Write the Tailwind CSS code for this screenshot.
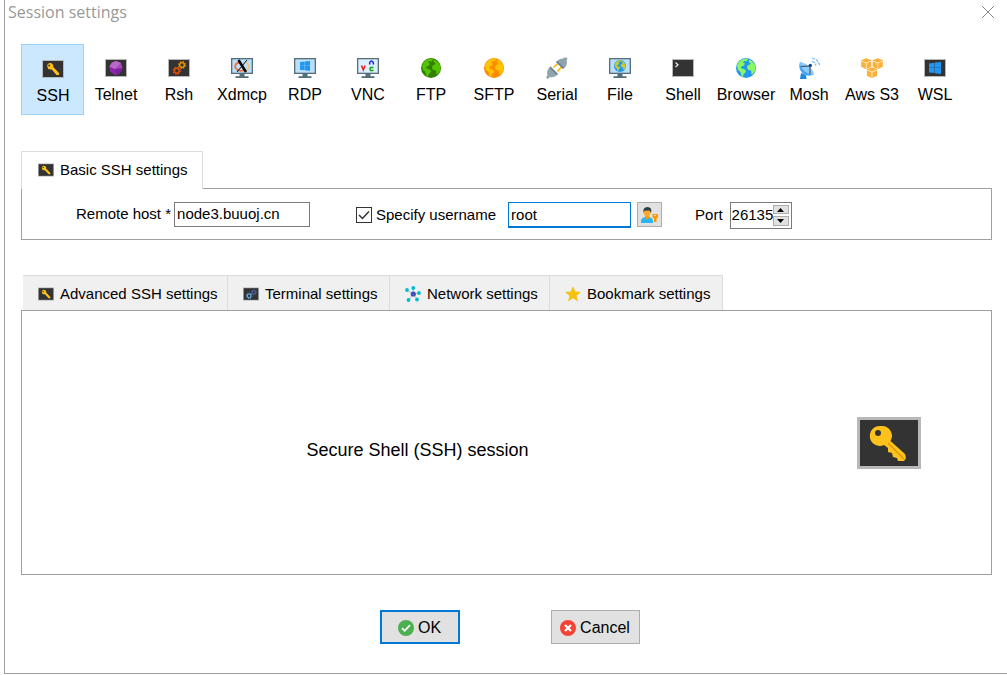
<!DOCTYPE html>
<html lang="en">
<head>
    <meta charset="UTF-8">
    <meta name="viewport" content="width=device-width, initial-scale=1.0">
    <title>Session settings</title>
    <script src="https://cdn.jsdelivr.net/npm/@tailwindcss/browser@4"></script>
</head>
<body class="flex flex-col min-h-screen bg-white pl-1 pb-px text-black text-[15px] leading-5 font-['Liberation_Sans',Arial,sans-serif]">
    <!-- Shared icons -->
    <svg class="hidden">
        <symbol id="key" viewBox="0 0 64 52">
            <path fill="#b8b8b8" d="M0 0h64v52H0z"/>
            <path fill="#333" d="M3 3h58v46H3z"/>
            <path fill="#ffc21c" fill-rule="evenodd" d="M24 9a10 10 0 1 0 3 19l4 3v4l4 1 1 4 4 1 1 3h6l2-3-1-4-14.500-13A10 10 0 0 0 24 9zm-3 4a3 3 0 1 1 0 6 3 3 0 0 1 0-6z"/>
            <path stroke="#d99a10" stroke-width="1.500" d="M31 26l16 16"/>
        </symbol>
        <symbol id="small-key" viewBox="0 0 22 18">
            <path fill="#b8b8b8" d="M0 0h22v18H0z"/>
            <path fill="#333" d="M1 1h20v16H1z"/>
            <path fill="#ffc21c" fill-rule="evenodd" d="M8 3a3.200 3.200 0 1 0 1.500 6.200L14.500 15H17v-2l-5.800-6A3.200 3.200 0 0 0 8 3zm-.8 1.500a1 1 0 1 1 0 2 1 1 0 0 1 0-2z"/>
        </symbol>
        <symbol id="globe" viewBox="0 0 20 20">
            <path fill="currentColor" d="M5 2Q8 .3 11 .4l1 1.600-2 1.500-2-.5-1 1.500 2 1-1 2-2.500 1L5 10l2.500 1 2.500 1.500-.5 2-2 1.500L7 19l-1.500-.7-1-4.300-2.500-2L1 8q1-4 4-6zM13.500 1.500Q18.500 4 19.500 9l-.5 4-2.500 3.500-1-.5-.5-3.500-2.500-.5-1.500-2 .5-2.500 2.500-1 .5-1.500-2-1z"/>
        </symbol>
        <symbol id="monitor" viewBox="0 0 22 20">
            <path fill="#546e7a" d="M0 0h22v16H0zM8.500 16h5v2.500h-5zM4.500 18.300h13V20h-13z"/>
            <path fill="currentColor" d="M1.300 1.300h19.400v13.400H1.300z"/>
        </symbol>
        <symbol id="gear" viewBox="0 0 10 10">
            <circle cx="5" cy="5" r="2.900" fill="none" stroke="currentColor" stroke-width="1.600"/>
            <circle cx="5" cy="5" r="4.200" fill="none" stroke="currentColor" stroke-width="1.500" stroke-dasharray="1.650 1.650"/>
        </symbol>
        <symbol id="windows" viewBox="0 0 12 12">
            <path fill="#2196f3" d="M0 1.500L5.600.7v5H0zM6 .6L12 0v5.700H6zM0 6.100h5.600v5L0 10.400zM6 6.100h6V12l-6-.8z"/>
        </symbol>
        <symbol id="cube" viewBox="0 0 12 12">
            <path fill="#fbb03b" d="M6 .3l5.300 2v6.900L6 11.700.7 9.200V2.300z"/>
            <path fill="none" stroke="#fff" stroke-width=".7" d="M1 3.300L6 5.200l5-1.900M6 5.200v6.300"/>
        </symbol>
    </svg>

    <div class="flex flex-col flex-1 border-l border-b border-[#a0a0a0]">
        <!-- Title bar -->
        <header class="flex items-center justify-between h-6 pl-[3px] pr-3 text-base text-[#999] font-['Open_Sans','Segoe_UI',sans-serif]">
            <h1>Session settings</h1>
            <button aria-label="Close">
                <svg class="w-[14px] h-[14px]" viewBox="0 0 14 14" fill="none" stroke="#888" stroke-width="1"><path d="M1 1l12 12M13 1L1 13"/></svg>
            </button>
        </header>

        <main class="flex flex-col flex-1 pl-4 pr-[15px] pt-5 pb-[29px]">
            <!-- Session types -->
            <nav class="flex items-start h-[71px] text-base leading-5 whitespace-nowrap">
                <button class="flex flex-col items-center w-[63px] h-[71px] pt-[13px] pl-px gap-2 border border-[#99d1ff] bg-[#cce8ff]">
                    <svg class="w-[22px] h-5" viewBox="0 0 22 20"><use href="#small-key" y="2" width="22" height="18"/></svg>
                    SSH
                </button>
                <button class="flex flex-col items-center w-[63px] pt-[14px] pl-px gap-[7px]">
                    <svg class="w-[22px] h-5" viewBox="0 0 22 20">
                        <path fill="#b8b8b8" d="M0 1h22v18H0z"/><path fill="#333" d="M1 2h20v16H1z"/>
                        <path fill="#ab47bc" d="M11 3l5 2 1.500 5-3 5.500-4 1.500-5-3.500-1-5L7 4.500z"/><path fill="#8e24aa" d="M4.500 8.500L10 11l.5 6-5-3.500z"/><path fill="#7b1fa2" d="M17.500 10l-7.500 1 .5 6 4-1.500z"/><path fill="#ba68c8" d="M11 3l5 2-6 6-5.500-2.500L7 4.500z"/>
                    </svg>
                    Telnet
                </button>
                <button class="flex flex-col items-center w-[63px] pt-[14px] pl-px gap-[7px]">
                    <svg class="w-[22px] h-5" viewBox="0 0 22 20">
                        <path fill="#b8b8b8" d="M0 1h22v18H0z"/><path fill="#333" d="M1 2h20v16H1z"/>
                        <use href="#gear" x="4.500" y="8.500" width="8.500" height="8.500" color="#e65100"/><use href="#gear" x="10" y="3" width="8" height="8" color="#fb9a00"/>
                    </svg>
                    Rsh
                </button>
                <button class="flex flex-col items-center w-[63px] pt-[14px] pl-px gap-[7px]">
                    <svg class="w-[22px] h-5" viewBox="0 0 22 20">
                        <use href="#monitor" width="22" height="20" color="#bbdefb"/>
                        <path fill="none" stroke="#f4703a" stroke-width="1.800" d="M10 4C4.500 4.500 3 8 5 10.500S10 13.500 13 12"/><path fill="none" stroke="#f5c26b" stroke-width="1.300" d="M15 4.500c4 2 4 7-1 8.500"/>
                        <path stroke="#000" stroke-width="2.500" d="M7.500 2l7.500 12"/><path stroke="#000" stroke-width="1" d="M16 2L6 14"/>
                    </svg>
                    Xdmcp
                </button>
                <button class="flex flex-col items-center w-[63px] pt-[14px] pl-px gap-[7px]">
                    <svg class="w-[22px] h-5" viewBox="0 0 22 20"><use href="#monitor" width="22" height="20" color="#bbdefb"/><use href="#windows" x="6" y="3" width="10" height="10"/></svg>
                    RDP
                </button>
                <button class="flex flex-col items-center w-[63px] pt-[14px] pl-px gap-[7px]">
                    <svg class="w-[22px] h-5" viewBox="0 0 22 20" fill="none" stroke-width="1.500">
                        <use href="#monitor" width="22" height="20" stroke="none" color="#dceffe"/>
                        <path stroke="#f01818" d="M4.500 7.500L6.300 12 8 7.500"/><path stroke="#2222e8" d="M12.700 6.500V4.300Q14.500 1.500 16.300 4.300v2.200"/><path stroke="#16a016" d="M16.500 9.400h-3q-1 1.600 0 3.200h3"/>
                    </svg>
                    VNC
                </button>
                <button class="flex flex-col items-center w-[63px] pt-[14px] pl-px gap-[7px]">
                    <svg class="w-5 h-5" viewBox="0 0 20 20"><circle cx="10" cy="10" r="10" fill="#338000"/><use href="#globe" width="20" height="20" color="#55c400"/></svg>
                    FTP
                </button>
                <button class="flex flex-col items-center w-[63px] pt-[14px] pl-px gap-[7px]">
                    <svg class="w-5 h-5" viewBox="0 0 20 20"><circle cx="10" cy="10" r="10" fill="#ff8c00"/><use href="#globe" width="20" height="20" color="#ffc400"/></svg>
                    SFTP
                </button>
                <button class="flex flex-col items-center w-[63px] pt-[14px] pl-px gap-[7px]">
                    <svg class="w-[22px] h-[22px] -my-px" viewBox="0 0 22 22">
                        <path stroke="#ffb300" stroke-width="1.600" d="M7.500 10.500L12 6.500M11.500 14.500L15.500 10"/>
                        <path fill="#90a4ae" d="M11 4q3-3 6-2.500L18.500.5h2l1 1-1 2Q22 7 18.500 11l-1.500.5L10.500 5zM4.500 10.500l7 7-1 1q-3.500 2.500-6.500 1.500L1.500 22 0 20.500 1.500 18Q0 14 3.500 10.500z"/>
                        <path stroke="#607d8b" stroke-width="1.500" d="M10.500 4.500l7 7M4 10l7.500 7.500"/>
                    </svg>
                    Serial
                </button>
                <button class="flex flex-col items-center w-[63px] pt-[14px] pl-px gap-[7px]">
                    <svg class="w-[22px] h-5" viewBox="0 0 22 20"><use href="#monitor" width="22" height="20" color="#bbdefb"/><circle cx="11" cy="8" r="6" fill="#2196f3"/><use href="#globe" x="5" y="2" width="12" height="12" color="#c8cc2c"/></svg>
                    File
                </button>
                <button class="flex flex-col items-center w-[63px] pt-[14px] pl-px gap-[7px]">
                    <svg class="w-[22px] h-5" viewBox="0 0 22 20"><path fill="#b8b8b8" d="M0 1h22v18H0z"/><path fill="#333" d="M1 2h20v16H1z"/><path fill="none" stroke="#eee" stroke-width="1.200" d="M3.500 4.500L6 6.700 3.500 9"/></svg>
                    Shell
                </button>
                <button class="flex flex-col items-center w-[63px] pt-[14px] pl-px gap-[7px]">
                    <svg class="w-5 h-5" viewBox="0 0 20 20"><circle cx="10" cy="10" r="10" fill="#2196f3"/><use href="#globe" width="20" height="20" color="#8cf860"/></svg>
                    Browser
                </button>
                <button class="flex flex-col items-center w-[63px] pt-[14px] pl-px gap-[7px]">
                    <svg class="w-[22px] h-[22px] -my-px" viewBox="0 0 22 22">
                        <path fill="#1e88e5" d="M3 16l5 2 .5 4H2z"/><path fill="#42a5f5" d="M2 5q-2.500 7 3.500 12 5 3 10.500.500z"/><path fill="#90caf9" d="M2 5c5 0 14 7 14 12.500C9 18 2 12 2 5z"/>
                        <path fill="none" stroke="#37474f" d="M3 9.500l9-.5v8"/><circle cx="12.300" cy="8.500" r="1.700" fill="#0d47a1"/>
                        <path fill="none" stroke="#64b5f6" stroke-width="1.100" stroke-dasharray="3 1" d="M14 4.500q3 .5 4 4M14 1q6 1 7.500 7"/>
                    </svg>
                    Mosh
                </button>
                <button class="flex flex-col items-center w-[63px] pt-[14px] pl-px gap-[7px]">
                    <svg class="w-[22px] h-5" viewBox="0 0 22 20"><use href="#cube" x="-.5" y="0" width="11.500" height="11.500"/><use href="#cube" x="11" y="0" width="11.500" height="11.500"/><use href="#cube" x="5.200" y="9" width="11.500" height="11.500"/></svg>
                    Aws S3
                </button>
                <button class="flex flex-col items-center w-[63px] pt-[14px] pl-px gap-[7px]">
                    <svg class="w-[22px] h-5" viewBox="0 0 22 20"><path fill="#b8b8b8" d="M0 1h22v18H0z"/><path fill="#333" d="M1 2h20v16H1z"/><use href="#windows" x="5" y="4" width="12" height="12"/></svg>
                    WSL
                </button>
            </nav>

            <!-- Basic settings -->
            <div class="flex mt-9">
                <button class="flex items-center gap-[6px] w-[182px] h-[38px] -mb-px pb-px pl-4 border border-b-0 border-[#dcdcdc] bg-white z-10 whitespace-nowrap">
                    <svg class="w-4 h-[14px]"><use href="#small-key"/></svg>
                    Basic SSH settings
                </button>
            </div>
            <form class="flex items-start h-[52px] pt-[13px] pl-[54px] border border-[#a0a0a0] whitespace-nowrap">
                <label for="host" class="pt-[2px]">Remote host *</label>
                <input id="host" type="text" value="node3.buuoj.cn" class="w-[136px] h-[25px] ml-[3px] px-[2px] pb-[2px] border border-[#7a7a7a] outline-none">
                <label class="flex items-center gap-1 w-[140px] ml-[46px] pt-[3px]">
                    <input type="checkbox" checked class="peer sr-only">
                    <svg class="w-4 h-4 border border-[#333]" viewBox="0 0 14 14" fill="none" stroke="#333" stroke-width="1.500"><path d="M2 7l3.500 3.500L12 3.500"/></svg>
                    Specify username
                </label>
                <input type="text" value="root" aria-label="Username" class="w-[123px] h-[26px] ml-3 px-[2px] pb-px border border-[#0078d7] border-b-2 outline-none">
                <button type="button" aria-label="Manage users" class="flex items-center justify-center w-[25px] h-[25px] ml-[6px] border border-[#adadad] bg-[#e1e1e1]">
                    <svg class="w-[17px] h-4" viewBox="0 0 17 16">
                        <path fill="#29b6f6" d="M0 16v-2q0-3 4-4h4q4 1 4 4v2z"/><path fill="#ff9800" d="M4 8h4v3l-2 2-2-2z"/><ellipse cx="6.200" cy="5.500" rx="3.300" ry="4" fill="#ffa726"/><path fill="#333f47" d="M2.500 6Q1.500 0 6.500 0T10 6L8.500 3.500l-5 .3z"/>
                        <path fill="#fb9a00" fill-rule="evenodd" d="M11.500 7H17v3.500l-1.500 1V15H13v-3.500l-1.500-1zm1.700 1v1h2V8z"/>
                    </svg>
                </button>
                <label for="port" class="ml-[33px] pt-[3px]">Port</label>
                <div class="flex w-[62px] h-[27px] ml-[7px] pr-[2px] border border-[#7a7a7a]">
                    <input id="port" type="text" value="26135" class="w-[42px] h-[23px] pl-px outline-none">
                    <div class="flex flex-col gap-[2px] pt-[2px]">
                        <button type="button" aria-label="Increase" class="flex items-center justify-center w-4 h-[9px] border border-[#adadad] bg-[#e1e1e1]"><svg class="w-[7px] h-1" viewBox="0 0 7 4"><path d="M0 4l3.500-4L7 4z"/></svg></button>
                        <button type="button" aria-label="Decrease" class="flex items-center justify-center w-4 h-[10px] border border-[#adadad] bg-[#e1e1e1]"><svg class="w-[7px] h-1" viewBox="0 0 7 4"><path d="M0 0l3.500 4L7 0z"/></svg></button>
                    </div>
                </div>
            </form>

            <!-- Extra settings -->
            <div class="flex mt-[35px] pl-[2px] whitespace-nowrap">
                <button class="flex items-center gap-[6px] w-[205px] h-[35px] pt-[2px] pl-[15px] border-t border-r border-[#dcdcdc] bg-[#f0f0f0]">
                    <svg class="w-4 h-[14px]"><use href="#small-key"/></svg>
                    Advanced SSH settings
                </button>
                <button class="flex items-center gap-[6px] w-[162px] h-[35px] pt-[2px] pl-[15px] border-t border-r border-[#dcdcdc] bg-[#f0f0f0]">
                    <svg class="w-4 h-[14px]" viewBox="0 0 22 18"><path fill="#b8b8b8" d="M0 0h22v18H0z"/><path fill="#333" d="M1 1h20v16H1z"/><use href="#gear" x="4" y="7" width="9" height="9" color="#64b5f6"/><use href="#gear" x="11" y="2.500" width="8" height="8" color="#5c6bc0"/></svg>
                    Terminal settings
                </button>
                <button class="flex items-center gap-[6px] w-40 h-[35px] pt-[2px] pl-[15px] border-t border-r border-[#dcdcdc] bg-[#f0f0f0]">
                    <svg class="w-4 h-4" viewBox="0 0 16 16"><path stroke="#b0bec5" d="M8 8L2 4M8 8V2M8 8l6-1M8 8l-4 6M8 8l4 5"/><g fill="#00bcd4"><circle cx="2" cy="4" r="1.900"/><circle cx="8.300" cy="2" r="1.900"/><circle cx="14" cy="7" r="1.900"/><circle cx="3.500" cy="14" r="1.900"/><circle cx="12" cy="13.500" r="1.900"/></g><circle cx="8.300" cy="8" r="2.600" fill="#3f51b5"/></svg>
                    Network settings
                </button>
                <button class="flex items-center gap-[6px] w-[173px] h-[35px] pt-[2px] pl-[15px] border-t border-r border-[#dcdcdc] bg-[#f0f0f0]">
                    <svg class="w-4 h-4" viewBox="0 0 16 16"><path fill="#f4c20d" d="M8 0l2.200 5.600 5.800.3-4.500 3.800L13 15.500l-5-3.300-5 3.300 1.500-5.800L0 5.900l5.800-.3z"/></svg>
                    Bookmark settings
                </button>
            </div>
            <section class="flex flex-1 items-center border border-[#a0a0a0]">
                <p class="flex-1 pt-[14px] text-lg text-center">Secure Shell (SSH) session</p>
                <svg class="w-16 h-[52px] ml-11 mr-[70px]"><use href="#key"/></svg>
            </section>

            <!-- Dialog buttons -->
            <footer class="flex justify-center gap-[91px] mt-[35px] pl-[6px] text-base">
                <button class="flex items-center justify-center gap-1 w-20 h-[34px] pt-px border-2 border-[#0078d7] bg-[#e1e1e1]">
                    <svg class="w-4 h-4" viewBox="0 0 16 16"><circle cx="8" cy="8" r="8" fill="#4caf50"/><path fill="none" stroke="#fff" stroke-width="1.800" d="M4 8.200l2.700 2.600L12 5.200"/></svg>
                    OK
                </button>
                <button class="flex items-center justify-center gap-1 w-[89px] h-[34px] pt-px border border-[#adadad] bg-[#e1e1e1]">
                    <svg class="w-4 h-4" viewBox="0 0 16 16"><circle cx="8" cy="8" r="8" fill="#f44336"/><path stroke="#fff" stroke-width="2.200" d="M5 5l6 6M11 5l-6 6"/></svg>
                    Cancel
                </button>
            </footer>
        </main>
    </div>
</body>
</html>
